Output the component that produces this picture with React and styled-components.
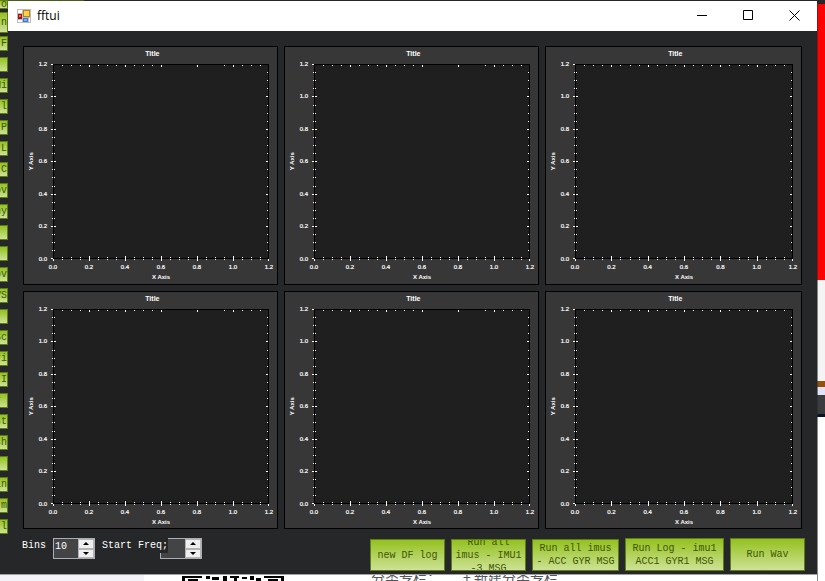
import React, { useId } from "react";
import styled, { createGlobalStyle } from "styled-components";

const GlobalStyle = createGlobalStyle`
  * { box-sizing: border-box; }
  body { margin: 0; overflow: hidden; background: #ffffff; }
`;

const mono = `"Liberation Mono", "Noto Sans CJK SC", monospace`;
const limeFill = "linear-gradient(#94c11f, #cde296)";

const Desktop = styled.div`
  display: grid;
  grid-template-columns: 8px minmax(0, 1fr) 8px;
  grid-template-rows: 1px minmax(0, 1fr) 7px;
  height: 100vh;
  overflow: hidden;
`;

const BehindTop = styled.div`
  grid-column: 2;
  grid-row: 1;
  background: linear-gradient(90deg, #4b5a1d 76px, #262729 76px);
`;

const LeftStrip = styled.div`
  grid-column: 1;
  grid-row: 1 / 3;
  overflow: hidden;
  background: #262729;
`;

const StripCell = styled.div`
  display: flex;
  align-items: ${(p) => (p.$top ? "flex-start" : "center")};
  justify-content: flex-end;
  height: ${(p) => (p.$top ? 12 : 21)}px;
`;

const StripButton = styled.button`
  display: flex;
  align-items: center;
  justify-content: flex-end;
  width: 8px;
  height: ${(p) => p.$height}px;
  padding: 0;
  overflow: hidden;
  border: 1px solid #5f7d17;
  border-left: 0;
  background: ${limeFill};
  color: #405704;
  font: 10px/12px ${mono};
  white-space: pre;
`;

const RightStrip = styled.div`
  grid-column: 3;
  grid-row: 1 / 4;
  display: flex;
  flex-direction: column;
`;

const Band = styled.div`
  flex: ${(p) => (p.$height ? `0 0 ${p.$height}px` : "1")};
  background: ${(p) => p.$color};
  box-shadow: inset 1px 0 0 rgba(40, 40, 40, 0.55);
`;

const BottomStrip = styled.div`
  grid-column: 1 / 3;
  grid-row: 3;
  display: flex;
  align-items: flex-end;
  height: 7px;
  overflow: hidden;
  border-top: 1px solid #a2a2a4;
  color: #55555c;
  font: 14px/16px "Noto Sans CJK SC", sans-serif;
  white-space: nowrap;
`;

const PagePane = styled.div`
  flex: 0 0 144px;
  height: 6px;
  margin-right: 38px;
  background: #f4f4f8;
`;

const QrArt = styled.svg`
  flex: 0 0 102px;
  height: 6px;
  margin-right: 87px;
`;

const PageText = styled.span`
  flex: 0 0 ${(p) => p.$width}px;
  line-height: 8px;
`;

const Window = styled.main`
  grid-column: 2;
  grid-row: 2;
  display: flex;
  flex-direction: column;
  background: #262729;
`;

const TitleBar = styled.header`
  display: flex;
  align-items: center;
  flex: 0 0 30px;
  padding-left: 9px;
  background: #ffffff;
`;

const WindowTitle = styled.h1`
  flex: 1;
  margin: 0 0 0 6px;
  color: #000000;
  font: 400 12px/16px "Open Sans", sans-serif;
`;

const CaptionButton = styled.button`
  display: flex;
  align-items: center;
  justify-content: center;
  width: 46px;
  height: 30px;
  padding: 0 0 1px;
  border: 0;
  background: transparent;
`;

const Charts = styled.section`
  display: grid;
  flex: 1;
  grid-template-columns: minmax(0, 255fr) minmax(0, 255fr) minmax(0, 257fr);
  grid-template-rows: repeat(2, minmax(0, 1fr));
  gap: 6px;
  min-height: 0;
  padding: 15px 15px 0;
`;

const ChartPanel = styled.figure`
  display: flex;
  margin: 0;
  padding: 17px 8px 25px 29px;
  border: 1px solid #000000;
  background: #373737;
`;

const Plot = styled.svg`
  flex: 1;
  min-width: 0;
  height: 100%;
  overflow: visible;
  fill: #ffffff;
  font: 6px "Liberation Sans", sans-serif;
  shape-rendering: crispEdges;
`;

const Caption = styled.text`
  font-size: ${(p) => p.$size}px;
  font-weight: 700;
  text-anchor: middle;
`;

const TickLabel = styled.text`
  stroke: #ffffff;
  stroke-width: 0.2px;
  text-anchor: ${(p) => p.$anchor};
`;

const Footer = styled.footer`
  display: flex;
  align-items: flex-end;
  justify-content: space-between;
  flex: 0 0 45px;
  padding: 0 12px 3px 14px;
`;

const Fields = styled.div`
  display: flex;
  align-items: flex-start;
  align-self: flex-start;
  padding-top: 9px;
`;

const FieldLabel = styled.label`
  position: relative;
  z-index: 1;
  margin-left: ${(p) => (p.$overlap ? 7 : 0)}px;
  margin-right: ${(p) => (p.$overlap ? -8 : 7)}px;
  background: #262729;
  color: #ffffff;
  font: 10px/15px ${mono};
`;

const Spinner = styled.div`
  display: flex;
  width: 42px;
  height: 21px;
  border: 1px solid #abadb3;
  background: #434445;
`;

const SpinnerInput = styled.input`
  flex: 1;
  min-width: 0;
  padding: 0 0 4px 1px;
  border: 0;
  outline: 0;
  background: transparent;
  color: #ffffff;
  font: 10px/14px ${mono};
`;

const Steps = styled.div`
  display: grid;
  width: 16px;
  grid-template-rows: 1fr 1fr;
  background: #ffffff;
`;

const StepButton = styled.button`
  display: flex;
  align-items: center;
  justify-content: center;
  padding: 0;
  border: 1px solid #b4b4b4;
  background: #efefef;
`;

const Actions = styled.div`
  display: flex;
  align-items: flex-end;
  gap: 6px;
`;

const ActionButton = styled.button`
  display: flex;
  align-items: center;
  justify-content: center;
  width: ${(p) => p.$width}px;
  height: ${(p) => (p.$tall ? 33 : 32)}px;
  padding: 0;
  overflow: hidden;
  border: 1px solid #5f7d17;
  background: ${limeFill};
  color: #405704;
  font: 10px/13px ${mono};
  text-align: center;
  white-space: pre;
`;

const stripLabels = ["F", " ", "Mi", " l", "P", "L", " C", "ov", "hy", " ", " ", "ov", "VS", " ", "Sc", "ri", "I", "r ", "st", "sh", " ", "in", " m", " l"];

const bands = [
  [4, "#262729"],
  [276, "#ff0000"],
  [101, "#f4f4f4"],
  [6, "#91520f"],
  [8, "#dfe3f5"],
  [19, "#3b3c40"],
  [3, "#071225"],
  [0, "#ffffff"],
];

const actions = [
  { text: "new DF log", width: 75 },
  { text: "Run all\nimus - IMU1\n-3 MSG", width: 75 },
  { text: "Run all imus\n- ACC GYR MSG", width: 87 },
  { text: "Run Log - imu1\nACC1 GYR1 MSG", width: 99, tall: true },
  { text: "Run Wav", width: 75, tall: true },
];

const divisions = Array.from({ length: 25 }, (_, i) => i);
const skippedTopTicks = [13, 14, 15, 17, 18];

function Chart({ sparseTop }) {
  return (
    <ChartPanel>
      <Plot role="img" aria-label="Title">
        <rect width="100%" height="100%" fill="#1f1f1f" />
        <rect width="100%" height="1" fill="#000" />
        <rect width="1" height="100%" fill="#000" />
        <svg x="100%" overflow="visible"><rect x="-1" width="1" height="100%" fill="#000" /></svg>
        <svg y="100%" overflow="visible"><rect y="-1" width="100%" height="1" fill="#000" /></svg>
        {divisions.map((i) => {
          const at = `${(i / 24) * 100}%`;
          const up = `${100 - (i / 24) * 100}%`;
          const major = i % 4 === 0;
          const reach = major ? 2 : 1;
          const inner = i > 0 && i < 24;
          return (
            <g key={i}>
              <svg x={at} y="100%" overflow="visible">
                {inner && <rect x="0" y={-reach - 1} width="1" height={reach} />}
                {major && inner && <rect x="0" y="-1" width="1" height="1" />}
                <rect x={i === 24 ? -1 : 0} y="0" width="1" height={reach} />
              </svg>
              <svg x="0" y={up} overflow="visible">
                <rect x={-reach} y={i === 0 ? -1 : 0} width={reach} height="1" />
                {inner && <rect x="1" y="0" width={reach} height="1" />}
              </svg>
              {inner && !(sparseTop && skippedTopTicks.includes(i)) && (
                <svg x={at} y="0" overflow="visible">
                  <rect x="0" y="1" width="1" height={reach} />
                </svg>
              )}
              {inner && (
                <svg x="100%" y={up} overflow="visible">
                  <rect x={-reach - 1} y="0" width={reach} height="1" />
                </svg>
              )}
            </g>
          );
        })}
        {divisions.filter((i) => i % 4 === 0).map((i) => (
          <g key={i}>
            <TickLabel x={`${(i / 24) * 100}%`} y="100%" dy="10" $anchor="middle">{(i / 20).toFixed(1)}</TickLabel>
            <TickLabel x="-6" y={`${100 - (i / 24) * 100}%`} dy="2" $anchor="end">{(i / 20).toFixed(1)}</TickLabel>
          </g>
        ))}
        <Caption x="46%" y="-8" $size={7}>Title</Caption>
        <Caption x="50%" y="100%" dy="20" $size={6}>X Axis</Caption>
        <svg x="-20" y="50%" overflow="visible">
          <Caption transform="rotate(-90)" $size={6}>Y Axis</Caption>
        </svg>
      </Plot>
    </ChartPanel>
  );
}

function NumberField({ label, value, overlap }) {
  const id = useId();
  return (
    <>
      <FieldLabel htmlFor={id} $overlap={overlap}>{label}</FieldLabel>
      <Spinner>
        <SpinnerInput id={id} defaultValue={value} />
        <Steps>
          <StepButton aria-label="Increase"><svg width="6" height="3"><path d="M0 3L3 0L6 3Z" /></svg></StepButton>
          <StepButton aria-label="Decrease"><svg width="6" height="3"><path d="M0 0L3 3L6 0Z" /></svg></StepButton>
        </Steps>
      </Spinner>
    </>
  );
}

function FormIcon() {
  return (
    <svg width="14" height="14" viewBox="0 0 14 14" shapeRendering="crispEdges">
      <rect width="14" height="14" fill="#bdbdbd" />
      <path d="M1 1h4v3H1zM1 11h4v2H1zM12 9h1v4h-1z" fill="#fff" />
      <rect x="6" y="1" width="7" height="7" fill="#b98110" />
      <rect x="7" y="2" width="5" height="5" fill="#fbd04a" />
      <rect x="1" y="5" width="4" height="5" fill="#9b1410" />
      <rect x="2" y="6" width="2" height="2" fill="#e9645a" />
      <rect x="6" y="9" width="5" height="4" fill="#3c78d8" />
      <rect x="7" y="10" width="3" height="2" fill="#79aef5" />
    </svg>
  );
}

export default function App() {
  return (
    <Desktop>
      <GlobalStyle />
      <BehindTop />
      <LeftStrip>
        <StripCell $top><StripButton $height={9}>o</StripButton></StripCell>
        <StripCell><StripButton $height={21}>n</StripButton></StripCell>
        {stripLabels.map((text, i) => (
          <StripCell key={i}><StripButton $height={15} aria-label={text.trim() || "Action"}>{text}</StripButton></StripCell>
        ))}
      </LeftStrip>
      <Window>
        <TitleBar>
          <FormIcon />
          <WindowTitle>fftui</WindowTitle>
          <CaptionButton aria-label="Minimize"><svg width="11" height="11"><path d="M0 5.5h10" stroke="#000" /></svg></CaptionButton>
          <CaptionButton aria-label="Maximize"><svg width="11" height="11"><path d="M.5 .5h9v9h-9z" fill="none" stroke="#000" /></svg></CaptionButton>
          <CaptionButton aria-label="Close"><svg width="11" height="11"><path d="M.5 .5l10 10M10.5 .5l-10 10" stroke="#000" /></svg></CaptionButton>
        </TitleBar>
        <Charts>
          {[0, 1, 2, 3, 4, 5].map((i) => <Chart key={i} sparseTop={i % 3 !== 2} />)}
        </Charts>
        <Footer>
          <Fields>
            <NumberField label="Bins" value="10" />
            <NumberField label="Start Freq;" value="" overlap />
          </Fields>
          <Actions>
            {actions.map((a) => <ActionButton key={a.text} $width={a.width} $tall={a.tall}>{a.text}</ActionButton>)}
          </Actions>
        </Footer>
      </Window>
      <RightStrip>
        {bands.map(([height, color]) => <Band key={color + height} $height={height} $color={color} />)}
      </RightStrip>
      <BottomStrip>
        <PagePane />
        <QrArt viewBox="0 0 102 6" shapeRendering="crispEdges">
          <path d="M0 1h20v2H3v3H0zM6 4h10v2H6zM24 1h4v3h-4zM30 2h7v3h-7zM41 1h4v5h-4zM48 1h9v2h-9zM52 3h3v3h-3zM60 2h5v2h-5zM68 1h4v4h-4zM74 3h5v3h-5zM82 1h20v5h-3V3H82zM86 4h10v2H86z" />
        </QrArt>
        <PageText $width={92}>分类专栏：</PageText>
        <PageText $width={120}>+ 新建分类专栏</PageText>
      </BottomStrip>
    </Desktop>
  );
}
